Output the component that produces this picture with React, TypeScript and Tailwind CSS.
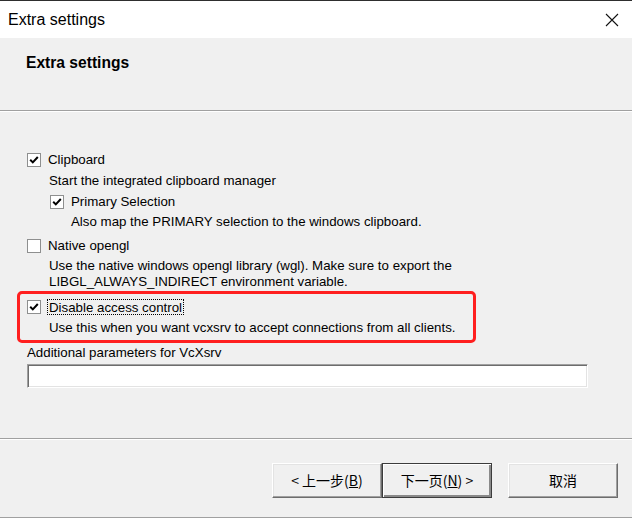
import React from "react";

function Check({ checked }: { checked: boolean }) {
  return (
    <span className="flex h-[14px] w-[14px] shrink-0 items-center justify-center border border-[#8e8f8f] bg-white">
      {checked && (
        <svg width="10" height="10" viewBox="0 0 10 10">
          <path d="M1.2 4.8 L3.8 7.4 L8.8 2" fill="none" stroke="#000" strokeWidth="2" />
        </svg>
      )}
    </span>
  );
}

function Line({ children, className = "" }: { children: React.ReactNode; className?: string }) {
  return <div className={"h-[16px] leading-[16px] whitespace-nowrap " + className}>{children}</div>;
}

function WinButton({ children, focused = false }: { children: React.ReactNode; focused?: boolean }) {
  return (
    <button
      className={
        "flex h-[35px] w-[110px] items-center justify-center bg-[#f0f0f0] text-[14px] text-black " +
        (focused
          ? "border border-[#3c3c3c] shadow-[inset_1px_1px_0_#fff,inset_-2px_-2px_0_#8a8a8a]"
          : "border-t border-l border-white border-r border-b border-r-[#6d6d6d] border-b-[#6d6d6d] shadow-[inset_-1px_-1px_0_#a0a0a0,inset_1px_1px_0_#e3e3e3]")
      }
    >
      {children}
    </button>
  );
}

export default function App() {
  return (
    <div
      className="relative flex h-[518px] w-[632px] flex-col overflow-hidden bg-[#f0f0f0] text-black"
      style={{ fontFamily: '"Liberation Sans", Arial, "Noto Sans CJK SC", sans-serif' }}
    >
      {/* window frame top */}
      <div className="h-px bg-[#2e2e2e]" />

      {/* title bar */}
      <div className="flex h-[37px] items-center justify-between bg-white pl-[8px] pr-[13px]">
        <span className="text-[16px]">Extra settings</span>
        <svg width="14" height="14" viewBox="0 0 14 14">
          <path d="M1 1 L13 13 M13 1 L1 13" stroke="#111" strokeWidth="1.1" />
        </svg>
      </div>

      {/* wizard header */}
      <div className="h-[72px] pl-[26px] pt-[16px]">
        <div className="h-[18px] text-[15.6px] font-bold leading-[18px]">Extra settings</div>
      </div>
      <div className="h-px bg-[#a0a0a0]" />
      <div className="h-px bg-white" />

      {/* body */}
      <div className="relative flex-1 pl-[27px] pt-[40px] text-[13.3px]">
        <div className="flex items-center gap-[7px]">
          <Check checked />
          <Line>Clipboard</Line>
        </div>
        <Line className="mt-[5px] pl-[22px]">Start the integrated clipboard manager</Line>
        <div className="mt-[5px] flex items-center gap-[7px] pl-[23px]">
          <Check checked />
          <Line>Primary Selection</Line>
        </div>
        <Line className="mt-[4px] pl-[44px]">Also map the PRIMARY selection to the windows clipboard.</Line>

        <div className="mt-[8px] flex items-center gap-[7px]">
          <Check checked={false} />
          <Line>Native opengl</Line>
        </div>
        <Line className="mt-[4px] pl-[22px]">
          Use the native windows opengl library (wgl). Make sure to export the
        </Line>
        <Line className="pl-[22px]">LIBGL_ALWAYS_INDIRECT environment variable.</Line>

        <div className="mt-[9px] flex items-center gap-[6px]">
          <Check checked />
          <Line className="border border-dotted border-black px-px">Disable access control</Line>
        </div>
        <Line className="mt-[5px] pl-[22px]">Use this when you want vcxsrv to accept connections from all clients.</Line>

        <Line className="mt-[9px]">Additional parameters for VcXsrv</Line>
        <div className="mt-[3px] h-[24px] w-[561px] border border-t-[#a0a0a0] border-l-[#a0a0a0] border-r-white border-b-white bg-white shadow-[inset_1px_1px_0_#6d6d6d,inset_-1px_-1px_0_#e3e3e3]" />

        {/* red annotation */}
        <div className="pointer-events-none absolute left-[17px] top-[179px] h-[52px] w-[459px] rounded-[5px] border-[3px] border-[#ff1f1f]" />
      </div>

      <div className="h-px bg-[#a0a0a0]" />
      <div className="h-px bg-white" />

      {/* footer */}
      <div
        className="flex h-[77px] items-start justify-end pr-[14px] pt-[23px]"
        style={{ fontFamily: '"Noto Sans CJK SC", "Liberation Sans", sans-serif' }}
      >
        <WinButton>
          &lt; 上一步(<span className="underline">B</span>)
        </WinButton>
        <WinButton focused>
          下一页(<span className="underline">N</span>) &gt;
        </WinButton>
        <div className="w-[16px]" />
        <WinButton>取消</WinButton>
      </div>
      <div className="h-px bg-[#a0a0a0]" />
    </div>
  );
}
